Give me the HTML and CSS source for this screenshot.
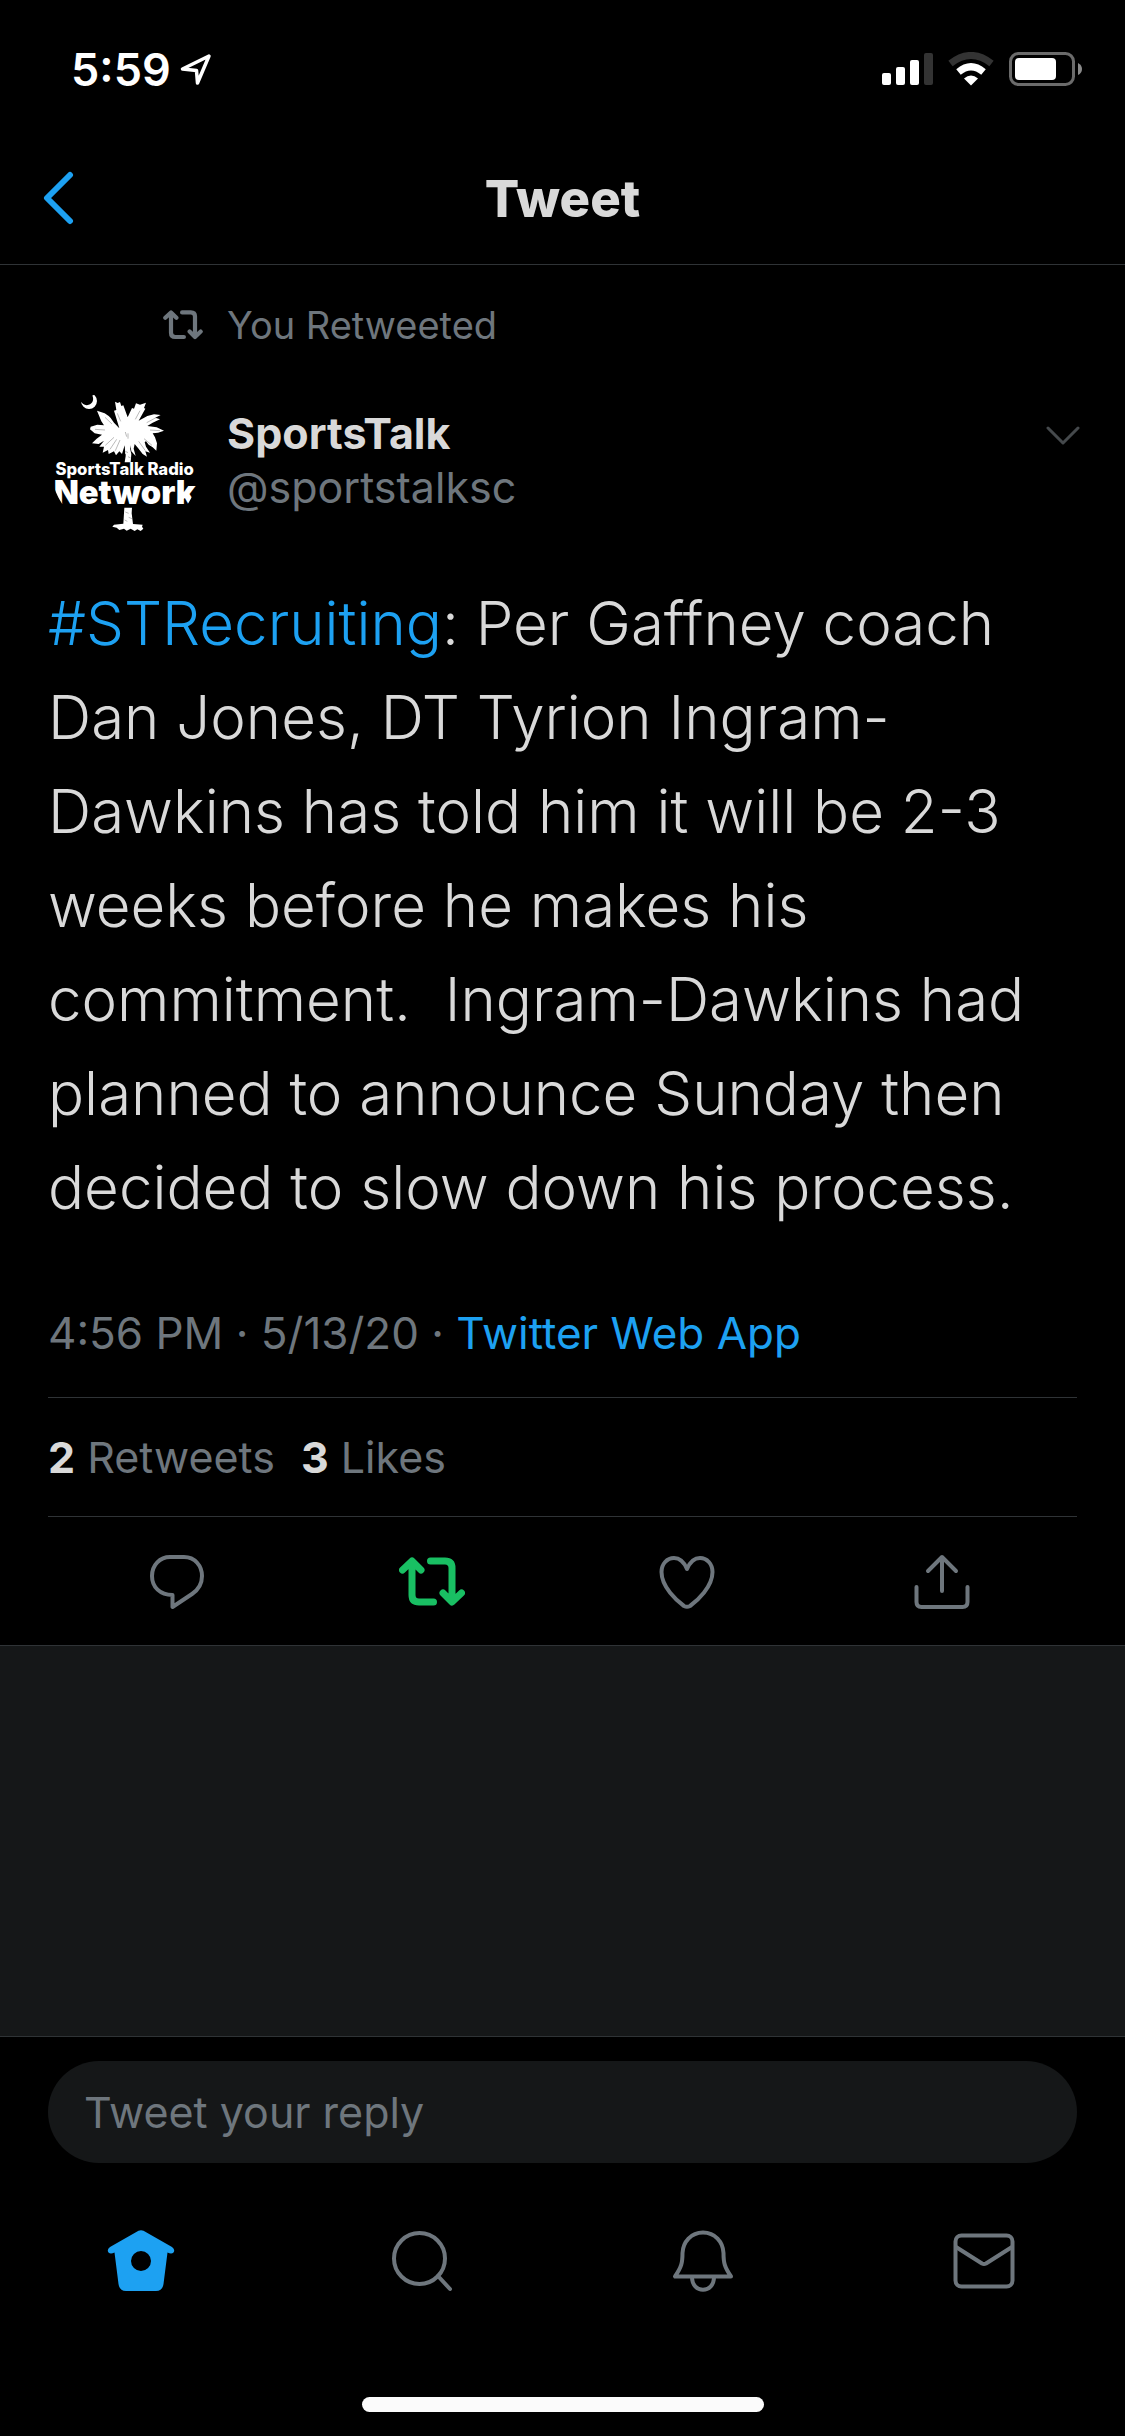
FILE: index.html
```html
<!DOCTYPE html>
<html lang="en">
<head>
    <meta charset="UTF-8">
    <meta name="viewport" content="width=device-width, initial-scale=1.0">
    <title>Tweet</title>
    <link rel="stylesheet" href="styles.css">
</head>
<body>
    <div class="status-bar">
        <div class="status-left">
            <span class="time">5:59</span>
            <svg class="location" width="32" height="32" viewBox="0 0 32 32" fill="none" stroke="#fff" stroke-width="3.500" stroke-linejoin="round">
                <path d="M29 3 L2.500 16 L16.500 17.500 L17.500 30 Z"/>
            </svg>
        </div>
        <div class="status-right">
            <svg width="51" height="34" viewBox="0 0 51 34" fill="#fff">
                <rect x="0" y="21" width="9" height="12" rx="2"/>
                <rect x="14" y="15" width="9" height="18" rx="2"/>
                <rect x="28" y="8" width="9" height="25" rx="2"/>
                <rect x="42" y="1" width="9" height="32" rx="2" fill="#333"/>
            </svg>
            <svg width="46" height="34" viewBox="0 0 46 34" fill="none" stroke-width="7">
                <path d="M2.500 11.500 Q23 -4.500 43.500 11.500" stroke="#333"/>
                <path d="M10.500 20 Q23 9.500 35.500 20" stroke="#fff"/>
                <path d="M16 26.500 Q23 20.500 30 26.500 L23 33.500 Z" fill="#fff" stroke="none"/>
            </svg>
            <svg width="74" height="34" viewBox="0 0 74 34">
                <rect x="1.500" y="1.500" width="63" height="31" rx="8" fill="none" stroke="#6b6b6b" stroke-width="3"/>
                <rect x="6" y="6" width="41" height="22" rx="4" fill="#fff"/>
                <path d="M69 11 Q73 13 73 17 Q73 21 69 23 Z" fill="#8a8a8a"/>
            </svg>
        </div>
    </div>

    <header class="header">
        <button class="back-btn" aria-label="Back">
            <svg width="32" height="54" viewBox="0 0 32 54" fill="none" stroke="#1da1f2" stroke-width="6" stroke-linecap="round" stroke-linejoin="round">
                <path d="M28 4 L5 27 L28 50"/>
            </svg>
        </button>
        <h1 class="title">Tweet</h1>
    </header>

    <main class="tweet">
        <div class="retweeted">
            <svg width="40" height="30" viewBox="0 0 66 50" fill="none" stroke="#6e767d" stroke-width="7" stroke-linecap="round" stroke-linejoin="round">
                <path d="M3.500 13 L13 4 L22 13 M13 5 V38 Q13 45 20 45 H34.500"/>
                <path d="M44 36 L53 45 L62.500 36 M53 44 V11 Q53 4 46 4 H31.500"/>
            </svg>
            <span>You Retweeted</span>
        </div>

        <div class="author">
            <svg class="avatar" viewBox="30 24 450 450" role="img" aria-label="SportsTalk Radio Network">
                <clipPath id="circle"><circle cx="255" cy="249" r="225"/></clipPath>
                <g fill="#fff" clip-path="url(#circle)">
                    <path d="M148 39 A24 24 0 1 1 123 64 A19 19 0 1 0 148 39 Z"/>
                    <path d="M238 145 L222 92 L229 90 L225 65 L233 69 L240 66 L244 78 L250 76 L263 112 L276 84 L282 86 L288 70 L300 74 L318 68 L312 84 L316 86 L296 122 L322 108 L342 103 L362 105 L346 113 L360 118 L338 128 L322 138 L350 142 L372 152 L354 158 L338 160 L345 172 L351 190 L349 212 L338 202 L326 194 L318 184 L314 186 L318 200 L330 218 L316 214 L321 230 L308 222 L294 204 L284 192 L281 206 L287 228 L274 214 L271 195 L270 222 L256 222 L254 196 L246 222 L238 214 L228 226 L222 214 L206 222 L204 210 L188 218 L192 200 L178 200 L192 182 L176 192 L156 190 L170 176 L186 164 L164 160 L150 148 L152 140 L172 134 L192 136 L184 124 L171 92 L194 100 L206 108 L212 114 L222 128 Z"/>
                    <path d="M256 190 H272 L270 206 L274 222 L272 247 H254 L257 228 Z"/>
                    <path d="M253 383 H276 L275 400 L279 432 L308 434 L306 440 L310 446 L302 453 L292 448 L284 453 L272 446 L260 452 L252 446 L238 450 L230 443 L217 440 L222 434 L250 431 Z"/>
                    <text class="logo-small" x="254" y="285" text-anchor="middle">SportsTalk Radio</text>
                    <text class="logo-big" x="254" y="373" text-anchor="middle">Network</text>
                </g>
                <g fill="none" stroke="#000" stroke-width="2" opacity="0.4">
                    <path d="M232 100 L242 124 M300 92 L286 118 M195 112 L216 132 M165 148 L195 150 M350 112 L320 128 M360 152 L330 150 M210 208 L230 178 M226 212 L240 180 M196 196 L222 172 M336 196 L312 176 M316 212 L296 184 M264 160 V176 M256 156 L260 170"/>
                    <path d="M256 214 L264 218 M264 230 L272 234 M256 396 L266 400 M266 412 L276 416 M254 420 L262 424"/>
                </g>
            </svg>
            <div class="names">
                <a class="name" href="#">SportsTalk</a>
                <a class="handle" href="#">@sportstalksc</a>
            </div>
            <button class="more-btn" aria-label="More">
                <svg width="34" height="20" viewBox="0 0 34 20" fill="none" stroke="#45494c" stroke-width="3" stroke-linecap="round" stroke-linejoin="round">
                    <path d="M2 2 L17 17 L32 2"/>
                </svg>
            </button>
        </div>

        <p class="text"><a href="#">#STRecruiting</a>: Per Gaffney coach Dan Jones, DT Tyrion Ingram-Dawkins has told him it will be 2-3 weeks before he makes his commitment.&nbsp; Ingram-Dawkins had planned to announce Sunday then decided to slow down his process.</p>

        <div class="meta">4:56 PM · 5/13/20 · <a href="#">Twitter Web App</a></div>

        <div class="stats">
            <a href="#"><strong>2</strong> Retweets</a>
            <a href="#"><strong>3</strong> Likes</a>
        </div>

        <div class="actions">
            <button aria-label="Reply">
                <svg width="56" height="56" viewBox="0 0 56 56" fill="none" stroke="#6e767d" stroke-width="4" stroke-linejoin="round">
                    <path d="M21 3 H35 C46 3 53 12 53 22 C53 30 49 36 43 40 L23.500 53 V41 C11 41 3 33 3 22 C3 11 11 3 21 3 Z"/>
                </svg>
            </button>
            <button aria-label="Undo retweet">
                <svg width="66" height="50" viewBox="0 0 66 50" fill="none" stroke="#19bf63" stroke-width="7" stroke-linecap="round" stroke-linejoin="round">
                    <path d="M3.500 13 L13 4 L22 13 M13 5 V38 Q13 45 20 45 H34.500"/>
                    <path d="M44 36 L53 45 L62.500 36 M53 44 V11 Q53 4 46 4 H31.500"/>
                </svg>
            </button>
            <button aria-label="Like">
                <svg width="56" height="56" viewBox="0 0 56 56" fill="none" stroke="#6e767d" stroke-width="4" stroke-linejoin="round">
                    <path d="M28 15 C25 8 20 4 15 4 C8 4 2.500 10 2.500 18 C2.500 33 18 47 25 52 Q28 53.500 31 52 C38 47 53.500 33 53.500 18 C53.500 10 48 4 41 4 C36 4 31 8 28 15 Z"/>
                </svg>
            </button>
            <button aria-label="Share">
                <svg width="56" height="56" viewBox="0 0 56 56" fill="none" stroke="#6e767d" stroke-width="4" stroke-linecap="round" stroke-linejoin="round">
                    <path d="M14 17 L28 3 L42 17 M28 3 V37 M2.500 33 V48 Q2.500 53 7.500 53 H48.500 Q53.500 53 53.500 48 V33"/>
                </svg>
            </button>
        </div>
    </main>

    <div class="replies"></div>

    <form class="reply">
        <input type="text" class="reply-input" placeholder="Tweet your reply" aria-label="Tweet your reply">
    </form>

    <nav class="tabs">
        <a href="#" aria-label="Home">
            <svg width="68" height="64" viewBox="0 0 68 64">
                <path fill="#1da1f2" fill-rule="evenodd" d="M31.500 1.800 Q34 0.500 36.500 1.800 L65 18 Q68.500 20.500 66.500 23.500 Q64.500 25.500 60.500 23.500 L56.500 55 Q55.500 62 49 62 H19 Q12.500 62 11.500 55 L7.500 23.500 Q3.500 25.500 1.500 23.500 Q-0.500 20.500 3 18 Z M34 22 A10 10 0 1 0 34 42 A10 10 0 1 0 34 22 Z"/>
            </svg>
        </a>
        <a href="#" aria-label="Search">
            <svg width="62" height="64" viewBox="0 0 62 64" fill="none" stroke="#6e767d" stroke-width="4" stroke-linecap="round">
                <circle cx="28.500" cy="29.500" r="25.500"/>
                <path d="M47 47 L59 60"/>
            </svg>
        </a>
        <a href="#" aria-label="Notifications">
            <svg width="62" height="64" viewBox="0 0 62 64" fill="none" stroke="#6e767d" stroke-width="4" stroke-linejoin="round">
                <path d="M31 3.500 C19 3.500 11 13 10.500 24 C10.500 34 9.500 38 3 47.500 H59 C52.500 38 51.500 34 51.500 24 C51 13 43 3.500 31 3.500 Z"/>
                <path d="M20 48 C20 65 42 65 42 48"/>
            </svg>
        </a>
        <a href="#" aria-label="Messages">
            <svg width="62" height="56" viewBox="0 0 62 56" fill="none" stroke="#6e767d" stroke-width="4" stroke-linejoin="round">
                <rect x="2.500" y="2.500" width="57" height="51" rx="6"/>
                <path d="M3 14 L29 30.500 Q31 31.500 33 30.500 L59 14"/>
            </svg>
        </a>
    </nav>

    <div class="home-indicator"></div>
</body>
</html>
```

FILE: styles.css
```css
* {
    margin: 0;
    padding: 0;
    box-sizing: border-box;
}

body {
    background: #000;
    color: #d9d9d9;
    font-family: Inter, Roboto, sans-serif;
    min-height: 100vh;
    display: flex;
    flex-direction: column;
}

a {
    color: inherit;
    text-decoration: none;
}

button {
    background: none;
    border: none;
    cursor: pointer;
    display: flex;
    align-items: center;
    justify-content: center;
}

svg {
    display: block;
}

/* Status bar */
.status-bar {
    display: flex;
    justify-content: space-between;
    align-items: center;
    height: 138px;
    padding: 0 42px 0 71px;
    color: #fff;
}

.status-left {
    display: flex;
    align-items: center;
    gap: 9px;
}

.time {
    font-size: 45px;
    font-weight: 600;
}

.status-right {
    display: flex;
    gap: 15px;
}

/* Header */
.header {
    display: grid;
    grid-template-columns: 1fr auto 1fr;
    align-items: center;
    height: 127px;
    padding: 0 42px 6px;
    border-bottom: 1px solid #2f3336;
}

.back-btn {
    justify-self: start;
}

.title {
    font-size: 51px;
    font-weight: 800;
}

/* Tweet */
.tweet {
    padding-top: 36px;
}

.retweeted {
    display: flex;
    align-items: center;
    gap: 24px;
    padding-left: 163px;
    font-size: 38px;
    line-height: 48px;
    color: #6e767d;
}

.author {
    display: flex;
    gap: 27px;
    padding: 39px 45px 0 50px;
}

.avatar {
    width: 150px;
    height: 150px;
    flex-shrink: 0;
}

.logo-small {
    font-size: 50px;
    font-weight: 800;
}

.logo-big {
    font-size: 98px;
    font-weight: 900;
}

.names {
    display: flex;
    flex-direction: column;
    flex: 1;
    padding-top: 18px;
    font-size: 43px;
    line-height: 54px;
}

.name {
    font-weight: 700;
}

.handle {
    color: #6e767d;
}

.more-btn {
    align-self: flex-start;
    padding-top: 38px;
}

.text {
    padding: 38px 48px 0;
    font-size: 60px;
    font-weight: 300;
    line-height: 94px;
}

.text a,
.meta a {
    color: #1da1f2;
}

.meta {
    margin: 0 48px;
    padding: 66px 0 31px;
    font-size: 44px;
    line-height: 66px;
    color: #6e767d;
    border-bottom: 1px solid #2f3336;
}

.stats {
    display: flex;
    gap: 26px;
    margin: 0 48px;
    padding: 26px 0;
    font-size: 43px;
    line-height: 66px;
    color: #6e767d;
    border-bottom: 1px solid #2f3336;
}

.stats strong {
    color: #d9d9d9;
    font-weight: 700;
}

.actions {
    display: grid;
    grid-template-columns: repeat(4, 1fr);
    height: 128px;
    padding: 2px 55px 0 49px;
}

.replies {
    flex: 1;
    background: #151718;
    border-top: 1px solid #2f3336;
    border-bottom: 1px solid #2f3336;
}

/* Reply box */
.reply {
    padding: 24px 48px;
}

.reply-input {
    width: 100%;
    height: 102px;
    padding: 0 36px;
    border: none;
    border-radius: 51px;
    background: #151718;
    color: #d9d9d9;
    font-family: inherit;
    font-size: 43px;
}

.reply-input::placeholder {
    color: #6e767d;
    opacity: 1;
}

/* Bottom tabs */
.tabs {
    display: grid;
    grid-template-columns: repeat(4, 1fr);
    justify-items: center;
    align-items: center;
    height: 148px;
}

.home-indicator {
    width: 402px;
    height: 15px;
    margin: 62px auto 24px;
    border-radius: 8px;
    background: #fbfbfb;
}
```
